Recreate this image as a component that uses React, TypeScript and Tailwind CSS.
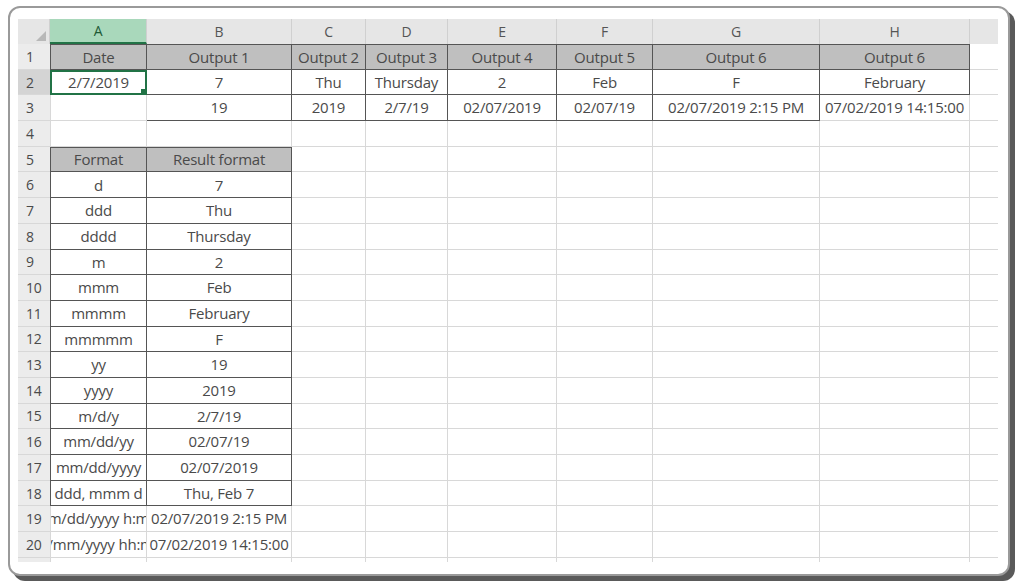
import React from "react";

const cols = ["A", "B", "C", "D", "E", "F", "G", "H", ""];
const widths = "grid-cols-[32px_97px_145px_74px_82px_109px_96px_167px_150px_40px]";

const top = [
  ["Date", "Output 1", "Output 2", "Output 3", "Output 4", "Output 5", "Output 6", "Output 6"],
  ["2/7/2019", "7", "Thu", "Thursday", "2", "Feb", "F", "February"],
  ["", "19", "2019", "2/7/19", "02/07/2019", "02/07/19", "02/07/2019 2:15 PM", "07/02/2019 14:15:00"],
];

const formats = [
  ["Format", "Result format"],
  ["d", "7"],
  ["ddd", "Thu"],
  ["dddd", "Thursday"],
  ["m", "2"],
  ["mmm", "Feb"],
  ["mmmm", "February"],
  ["mmmmm", "F"],
  ["yy", "19"],
  ["yyyy", "2019"],
  ["m/d/y", "2/7/19"],
  ["mm/dd/yy", "02/07/19"],
  ["mm/dd/yyyy", "02/07/2019"],
  ["ddd, mmm d", "Thu, Feb 7"],
  ["mm/dd/yyyy h:mm", "02/07/2019 2:15 PM"],
  ["dd/mm/yyyy hh:mm", "07/02/2019 14:15:00"],
];

type Cell = { text: string; dark: boolean; head: boolean; sel?: boolean };

function rowCells(r: number): Cell[] {
  const out: Cell[] = Array.from({ length: 9 }, () => ({ text: "", dark: false, head: false }));
  if (r >= 1 && r <= 3) {
    top[r - 1].forEach((t, i) => {
      out[i] = { text: t, dark: !(r === 3 && (i === 0 || i === 7)), head: r === 1 };
    });
    if (r === 2) out[0].sel = true;
  }
  if (r >= 5 && r <= 20) {
    const f = formats[r - 5];
    out[0] = { text: f[0], dark: r <= 18, head: r === 5 };
    out[1] = { text: f[1], dark: r <= 18, head: r === 5 };
  }
  return out;
}

export default function App() {
  const rows = Array.from({ length: 21 }, (_, i) => i + 1);
  return (
    <div className="w-[1024px] h-[588px] bg-white pl-[8px] pt-[6px]" style={{ fontFamily: "'Open Sans', 'Liberation Sans', sans-serif" }}>
      <div className="w-[1002px] h-[570px] rounded-xl border-2 border-[#9a9a9a] shadow-[5px_5px_0_#5a5a5a] bg-white overflow-hidden pl-[8px] pt-[11px] pr-[10px] pb-[12px]">
        <div className="h-full overflow-hidden">
          <div className={`grid ${widths} text-[15px] tracking-[-0.2px] text-[#4a4a4a]`}>
            <div className="h-[25px] bg-[#e6e6e6] border-r border-[#d0d0d0] flex items-end justify-end p-[3px]">
              <div className="w-0 h-0 border-l-[10px] border-l-transparent border-b-[10px] border-b-[#b8b8b8]" />
            </div>
            {cols.map((c, i) => (
              <div
                key={i}
                className={`h-[25px] text-[14px] flex items-center justify-center border-r border-[#d0d0d0] ${
                  i === 0 ? "bg-[#a9d8bb] border-b-2 border-b-[#217346] text-[#1e5a36]" : "bg-[#e6e6e6] text-[#555]"
                }`}
              >
                {c}
              </div>
            ))}
            {rows.map((r) =>
              [
                <div key={`n${r}`} className={`h-[25.7px] text-[14px] flex items-center pl-[8px] border-b border-[#d8d8d8] ${r === 2 ? "bg-[#d4d4d4]" : "bg-[#ececec]"}`}>
                  {r}
                </div>,
                ...rowCells(r).map((c, i) => (
                  <div
                    key={`${r}-${i}`}
                    className={`relative h-[25.7px] flex items-center justify-center overflow-hidden whitespace-nowrap border-r border-b ${
                      c.dark ? "border-[#555]" : "border-[#d8d8d8]"
                    } ${i === 0 ? (c.dark ? "border-l border-l-[#555]" : "border-l border-l-[#d8d8d8]") : ""} ${
                      c.head ? "bg-[#bfbfbf] border-t border-t-[#555]" : ""
                    } ${c.sel ? "outline-2 outline-[#217346] -outline-offset-2 z-10" : ""}`}
                  >
                    <span className="shrink-0">{c.text}</span>
                    {c.sel && <div className="absolute right-0 bottom-0 w-[5px] h-[5px] bg-[#217346]" />}
                  </div>
                )),
              ]
            )}
          </div>
        </div>
      </div>
    </div>
  );
}
